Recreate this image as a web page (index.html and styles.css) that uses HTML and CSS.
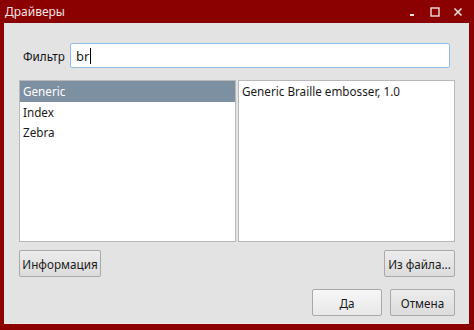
FILE: index.html
```html
<!DOCTYPE html>
<html lang="ru">
<head>
<meta charset="utf-8">
<link rel="stylesheet" href="styles.css">
</head>
<body>
<div class="window">
  <div class="titlebar">
    <span class="title">Драйверы</span>
    <div class="controls">
      <svg class="ctl" width="10" height="10" viewBox="0 0 10 10"><rect x="3" y="7" width="4" height="2" fill="#f3dede"/></svg>
      <svg class="ctl" width="10" height="10" viewBox="0 0 10 10"><rect x="1" y="1" width="8" height="8" fill="none" stroke="#f3dede" stroke-width="1.4"/></svg>
      <svg class="ctl" width="10" height="10" viewBox="0 0 10 10"><path d="M1.5 1.5 L8.5 8.5 M8.5 1.5 L1.5 8.5" stroke="#f3dede" stroke-width="1.6"/></svg>
    </div>
  </div>
  <div class="content">
    <div class="filter-row">
      <label class="filter-label">Фильтр</label>
      <div class="input"><span>br</span><span class="caret"></span></div>
    </div>
    <div class="lists">
      <div class="list">
        <div class="item selected">Generic</div>
        <div class="item">Index</div>
        <div class="item">Zebra</div>
      </div>
      <div class="list">
        <div class="item">Generic Braille embosser, 1.0</div>
      </div>
    </div>
    <div class="btn-row">
      <button class="btn info">Информация</button>
      <button class="btn file">Из файла...</button>
    </div>
    <div class="dlg-row">
      <button class="btn ok">Да</button>
      <button class="btn cancel">Отмена</button>
    </div>
  </div>
</div>
</body>
</html>
```
FILE: styles.css
```css
* { box-sizing: border-box; }
html, body { margin: 0; padding: 0; }
body {
  width: 474px;
  height: 330px;
  background: #8b0000;
  font-family: "Noto Sans", "Open Sans", sans-serif;
  font-size: 11.7px;
  color: #1a1a1a;
  overflow: hidden;
}
.window {
  display: flex;
  flex-direction: column;
  height: 330px;
  padding: 0 5px 6px 4px;
}
.titlebar {
  height: 23px;
  display: flex;
  align-items: center;
  justify-content: space-between;
  padding-left: 1px;
}
.title {
  color: #f3e4e4;
  font-size: 12px;
}
.controls {
  display: flex;
  gap: 13px;
  padding-right: 6px;
  align-items: center;
}
.ctl { display: block; }
.content {
  flex: 1;
  background: #e3e3e3;
  border-bottom: 1px solid #f0e6e6;
  padding: 20px 14px 7px 15px;
  display: flex;
  flex-direction: column;
}
.filter-row {
  display: flex;
  align-items: center;
  height: 25px;
  padding-right: 5px;
}
.filter-label {
  margin-left: 4px;
  width: 47px;
  color: #111;
}
.input {
  flex: 1;
  height: 25px;
  background: #fff;
  border: 1px solid #93bde0;
  border-radius: 2px;
  display: flex;
  align-items: center;
  padding-left: 5px;
  font-size: 13px;
}
.caret {
  display: inline-block;
  width: 1px;
  height: 16px;
  background: #000;
  margin-left: 1px;
}
.lists {
  margin-top: 12px;
  height: 162px;
  display: grid;
  grid-template-columns: 217px 217px;
  column-gap: 2px;
}
.list {
  background: #fff;
  border: 1px solid #b9b9b9;
  display: flex;
  flex-direction: column;
}
.item {
  height: 20px;
  line-height: 20px;
  padding-left: 3px;
  white-space: nowrap;
}
.selected {
  background: #7d90a2;
  color: #fff;
  height: 21px;
  line-height: 21px;
}
.btn-row {
  margin-top: 8px;
  display: flex;
  justify-content: space-between;
}
.dlg-row {
  margin-top: 12px;
  display: flex;
  justify-content: flex-end;
  gap: 8px;
}
.btn {
  height: 27px;
  font-family: inherit;
  font-size: 11.7px;
  color: #1a1a1a;
  background: linear-gradient(#ececec, #dcdcdc);
  border: 1px solid #a9a9a9;
  border-radius: 2px;
  padding: 0;
}
.info { width: 82px; }
.file { width: 71px; }
.ok { width: 70px; background: linear-gradient(#f7f7f7, #e8e8e8); }
.cancel { width: 65px; }
```
